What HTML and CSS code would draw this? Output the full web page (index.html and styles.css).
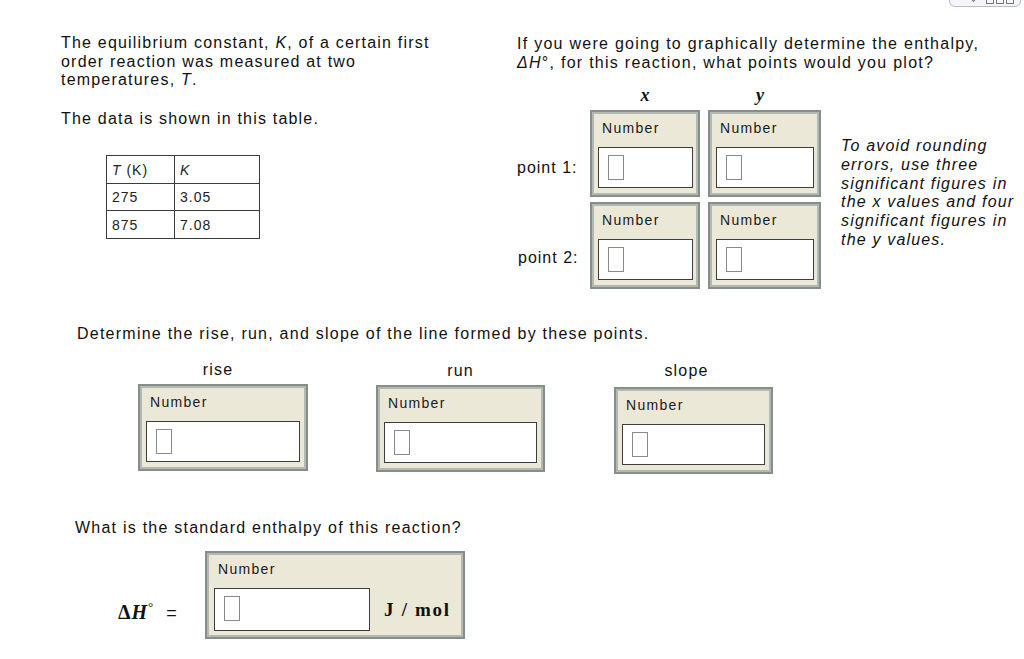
FILE: index.html
```html
<!DOCTYPE html>
<html>
<head>
<meta charset="utf-8">
<link rel="stylesheet" href="styles.css">
</head>
<body>
<div class="page">
  <div class="corner-widget"><span class="cw-mark"></span><span class="cw-sq"></span><span class="cw-sq"></span><span class="cw-sq"></span></div>

  <div class="top">
    <div class="intro">
      <p>The equilibrium constant, <i>K</i>, of a certain first<br>order reaction was measured at two<br>temperatures, <i>T</i>.</p>
      <p class="data">The data is shown in this table.</p>
      <table class="ktable">
        <tr><td class="c1"><i>T</i> (K)</td><td class="c2"><i>K</i></td></tr>
        <tr class="r2"><td class="c1">275</td><td class="c2">3.05</td></tr>
        <tr class="r3"><td class="c1">875</td><td class="c2">7.08</td></tr>
      </table>
    </div>

    <div class="plot">
      <p class="q">If you were going to graphically determine the enthalpy,<br><i>ΔH</i>°, for this reaction, what points would you plot?</p>
      <div class="plot-body">
        <div class="pgrid">
          <div class="axes"><span class="ax ax-x">x</span><span class="ax ax-y">y</span></div>
          <div class="prow">
            <div class="plabel">point 1:</div>
            <div class="nbox pbox"><div class="nlabel">Number</div><div class="ninput"><span class="caret"></span></div></div>
            <div class="nbox pbox pbox-y"><div class="nlabel">Number</div><div class="ninput"><span class="caret"></span></div></div>
          </div>
          <div class="prow">
            <div class="plabel plabel2">point 2:</div>
            <div class="nbox pbox"><div class="nlabel">Number</div><div class="ninput"><span class="caret"></span></div></div>
            <div class="nbox pbox pbox-y"><div class="nlabel">Number</div><div class="ninput"><span class="caret"></span></div></div>
          </div>
        </div>
        <p class="note">To avoid rounding<br>errors, use three<br>significant figures in<br>the x values and four<br>significant figures in<br>the y values.</p>
      </div>
    </div>
  </div>

  <p class="steps">Determine the rise, run, and slope of the line formed by these points.</p>
  <div class="slope-row">
    <div class="scol scol-rise">
      <div class="slabel">rise</div>
      <div class="nbox sbox"><div class="nlabel">Number</div><div class="ninput"><span class="caret"></span></div></div>
    </div>
    <div class="scol scol-run">
      <div class="slabel">run</div>
      <div class="nbox sbox"><div class="nlabel">Number</div><div class="ninput"><span class="caret"></span></div></div>
    </div>
    <div class="scol scol-slope">
      <div class="slabel">slope</div>
      <div class="nbox sbox"><div class="nlabel">Number</div><div class="ninput"><span class="caret"></span></div></div>
    </div>
  </div>

  <p class="final-q">What is the standard enthalpy of this reaction?</p>
  <div class="final-row">
    <div class="dh">Δ<i>H</i><sup>°</sup> <span class="eq">=</span></div>
    <div class="nbox fbox">
      <div class="nlabel">Number</div>
      <div class="frow">
        <div class="ninput finput"><span class="caret"></span></div>
        <div class="unit">J / mol</div>
      </div>
    </div>
  </div>
</div>
</body>
</html>
```

FILE: styles.css
```css
body {
  margin: 0;
  background: #fff;
  color: #111;
  font-family: "Liberation Sans", Arial, sans-serif;
}

.page {
  position: relative;
  width: 1024px;
  height: 659px;
  box-sizing: border-box;
  padding-top: 34px;
  overflow: hidden;
}

.corner-widget {
  position: absolute;
  top: -11px;
  right: 3px;
  width: 72px;
  height: 18px;
  border: 1px solid #b6bdc8;
  border-radius: 6px;
  background: #f4f6f9;
  display: flex;
  align-items: flex-end;
  justify-content: flex-end;
  gap: 2px;
  padding: 0 6px 2px 0;
  box-sizing: border-box;
}
.cw-mark {
  width: 4px;
  height: 4px;
  border-right: 1px solid #777;
  border-bottom: 1px solid #777;
  transform: rotate(45deg);
  margin: 0 8px 3px 0;
}
.cw-sq {
  width: 8px;
  height: 8px;
  border: 1px solid #777;
  box-sizing: border-box;
}

.top {
  display: flex;
}

.intro {
  width: 380px;
  margin-left: 61px;
  margin-right: 76px;
}
.intro p {
  margin: 0;
  font-size: 16px;
  letter-spacing: 1.2px;
  line-height: 18.5px;
  white-space: nowrap;
}
.intro .data {
  margin-top: 20px;
}

.ktable {
  margin: 27px 0 0 45px;
  border-collapse: collapse;
  font-size: 14px;
  letter-spacing: 1px;
  color: #222;
}
.ktable td {
  border: 1px solid #3c3c3c;
  padding: 0 0 0 5px;
  height: 28px;
  box-sizing: border-box;
  vertical-align: middle;
}
.ktable .c1 { width: 68px; }
.ktable .c2 { width: 85px; }
.ktable .r2 td { height: 27px; }

.plot {
  flex: 1;
}
.plot .q {
  margin: 0;
  font-size: 16px;
  letter-spacing: 1.27px;
  line-height: 19px;
  white-space: nowrap;
}

.plot-body {
  display: flex;
  align-items: flex-start;
}

.axes {
  display: flex;
  gap: 8px;
  margin: 13px 0 0 73px;
  height: 20px;
  font-family: "Liberation Serif", "Times New Roman", serif;
  font-weight: bold;
  font-style: italic;
  font-size: 18px;
  line-height: 20px;
}
.ax {
  text-align: center;
}
.ax-x { width: 110px; }
.ax-y { width: 104px; }

.prow {
  display: flex;
  gap: 8px;
  margin-top: 5px;
}
.plabel {
  width: 65px;
  font-size: 16px;
  letter-spacing: 1px;
  line-height: 19px;
  padding-top: 48px;
  white-space: nowrap;
}
.plabel2 {
  padding-top: 46px;
  margin-left: 1px;
  width: 64px;
}

.nbox {
  background: #ebe8d8;
  border: 2px solid #868e8a;
  box-shadow: inset 0 0 0 2px #b2b9b1;
  padding: 8px 5px 7px 6px;
  box-sizing: border-box;
}
.nlabel {
  font-size: 14px;
  letter-spacing: 1.3px;
  line-height: 17px;
  color: #1a1a1a;
  padding-left: 4px;
}
.ninput {
  margin-top: 10px;
  height: 41px;
  background: #fff;
  border: 1px solid #3d3d3d;
  box-sizing: border-box;
  padding: 7px 9px;
}
.caret {
  display: block;
  width: 16px;
  height: 25px;
  border: 1px solid #8a8a8a;
  box-sizing: border-box;
}

.pbox {
  width: 110px;
  height: 87px;
}
.pbox-y {
  width: 113px;
}

.note {
  margin: 65px 0 0 20px;
  font-size: 16px;
  letter-spacing: 1.18px;
  font-style: italic;
  line-height: 18.8px;
  white-space: nowrap;
}

.steps {
  margin: 36px 0 0 77px;
  font-size: 16px;
  letter-spacing: 1.24px;
  line-height: 18px;
  white-space: nowrap;
}

.slope-row {
  display: flex;
  align-items: flex-start;
  margin: 18px 0 0 138px;
}
.scol {
  display: flex;
  flex-direction: column;
}
.slabel {
  font-size: 16px;
  letter-spacing: 1.2px;
  line-height: 18px;
  text-align: center;
  margin-bottom: 5px;
}
.scol-rise { width: 170px; }
.scol-rise .slabel { padding-right: 10px; }
.scol-run { width: 169px; margin-left: 68px; margin-top: 1px; }
.scol-slope { width: 159px; margin-left: 69px; margin-top: 1px; }
.scol-slope .slabel { padding-right: 14px; margin-bottom: 7px; }

.sbox {
  height: 87px;
  padding-right: 6px;
}

.final-q {
  margin: 45px 0 0 75px;
  font-size: 16px;
  letter-spacing: 1.23px;
  line-height: 18px;
  white-space: nowrap;
}

.final-row {
  display: flex;
  align-items: flex-start;
  margin: 14px 0 0 118px;
}
.dh {
  width: 87px;
  margin-top: 50px;
  font-family: "Liberation Serif", "Times New Roman", serif;
  font-weight: bold;
  font-size: 20px;
  letter-spacing: 1px;
  line-height: 22px;
  white-space: nowrap;
}
.dh sup {
  font-size: 13px;
  font-weight: normal;
  vertical-align: 8px;
  line-height: 0;
}
.dh .eq {
  font-family: "Liberation Sans", Arial, sans-serif;
  font-weight: normal;
  font-size: 18px;
  margin-left: 6px;
}

.fbox {
  width: 260px;
  height: 88px;
  padding-left: 7px;
}
.frow {
  display: flex;
  align-items: center;
  margin-top: 10px;
}
.finput {
  margin-top: 0;
  width: 156px;
  height: 43px;
}
.unit {
  margin-left: 14px;
  font-family: "Liberation Serif", "Times New Roman", serif;
  font-weight: bold;
  font-size: 19px;
  letter-spacing: 1.7px;
  white-space: nowrap;
}
```
